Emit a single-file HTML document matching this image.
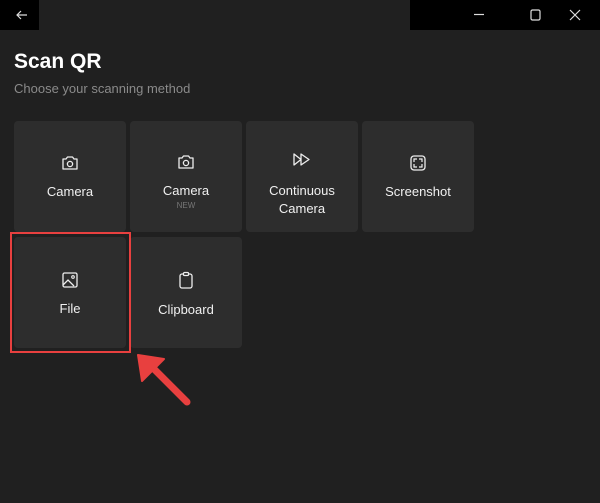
<!DOCTYPE html>
<html><head><style>
body{margin:0;width:600px;height:503px;background:#202020;position:relative;overflow:hidden;font-family:"Liberation Sans",sans-serif;color:#fff}
.blk{position:absolute;background:#000;top:0;height:30px}
.t{position:absolute;width:112px;height:111px;background:#2d2d2d;border-radius:4px;text-align:center;font-size:13px;color:#f0f0f0}
.t svg{position:absolute;left:46px;top:32px}
.t .l{position:absolute;left:0;right:0;top:63px}
</style></head><body>
<div class="blk" style="left:0;width:39px"></div>
<div class="blk" style="left:410px;width:190px"></div>
<svg style="position:absolute;left:14px;top:8px" width="16" height="14" viewBox="0 0 16 14"><path d="M13 7H3M7 3L3 7L7 11" stroke="#ddd" stroke-width="1.2" fill="none"/></svg>
<svg style="position:absolute;left:420px;top:0" width="180" height="30"><path d="M54 14.5H64" stroke="#ddd" stroke-width="1.2"/><rect x="111" y="10" width="9" height="10" rx="1.5" stroke="#ddd" stroke-width="1.2" fill="none"/><path d="M150 10L160 20M160 10L150 20" stroke="#ddd" stroke-width="1.2"/></svg>
<div style="position:absolute;left:14px;top:50px;font-size:21px;font-weight:bold">Scan QR</div>
<div style="position:absolute;left:14px;top:81px;font-size:13px;color:#8a8a8a">Choose your scanning method</div>

<div class="t" style="left:14px;top:121px"><svg width="20" height="20" viewBox="0 0 20 20"><path d="M3 6h3l1.5-2h5L14 6h3v10H3z" stroke="#eee" stroke-width="1.3" fill="none" stroke-linejoin="round"/><circle cx="10" cy="11" r="2.6" stroke="#eee" stroke-width="1.3" fill="none"/></svg><div class="l">Camera</div></div>
<div class="t" style="left:130px;top:121px"><svg width="20" height="20" viewBox="0 0 20 20" style="top:31px"><path d="M3 6h3l1.5-2h5L14 6h3v10H3z" stroke="#eee" stroke-width="1.3" fill="none" stroke-linejoin="round"/><circle cx="10" cy="11" r="2.6" stroke="#eee" stroke-width="1.3" fill="none"/></svg><div class="l" style="top:62px">Camera</div><div class="l" style="top:80px;font-size:8px;color:#777">NEW</div></div>
<div class="t" style="left:246px;top:121px"><svg width="20" height="20" viewBox="0 0 20 20" style="top:29px"><path d="M2 4v11l7-5.5zM9 4v11l8-5.5z" stroke="#eee" stroke-width="1.3" fill="none" stroke-linejoin="round"/></svg><div class="l" style="top:61px;line-height:18px">Continuous<br>Camera</div></div>
<div class="t" style="left:362px;top:121px"><svg width="20" height="20" viewBox="0 0 20 20"><rect x="3" y="3" width="14" height="14" rx="3" stroke="#eee" stroke-width="1.3" fill="none"/><path d="M6 9V6h3M11 6h3v3M14 11v3h-3M9 14H6v-3" stroke="#eee" stroke-width="1.2" fill="none"/></svg><div class="l">Screenshot</div></div>
<div class="t" style="left:14px;top:237px"><svg width="20" height="20" viewBox="0 0 20 20" style="top:33px"><rect x="3" y="3" width="14" height="14" rx="1.5" stroke="#eee" stroke-width="1.3" fill="none"/><path d="M3 15l5-5 6 6" stroke="#eee" stroke-width="1.3" fill="none"/><circle cx="13" cy="7" r="1.3" stroke="#eee" stroke-width="1.1" fill="none"/></svg><div class="l" style="top:64px">File</div></div>
<div class="t" style="left:130px;top:237px"><svg width="20" height="20" viewBox="0 0 20 20" style="top:33px"><rect x="4" y="4" width="12" height="14" rx="2" stroke="#eee" stroke-width="1.3" fill="none"/><rect x="7.5" y="2.5" width="5" height="3" rx="1" stroke="#eee" stroke-width="1.2" fill="#2d2d2d"/></svg><div class="l" style="top:65px">Clipboard</div></div>

<div style="position:absolute;left:10px;top:232px;width:117px;height:117px;border:2px solid #e8403f"></div>
<svg style="position:absolute;left:130px;top:350px" width="70" height="65"><path d="M57 52L20 15" stroke="#e8403f" stroke-width="7" stroke-linecap="round"/><path d="M8 5L34 9L12 31Z" fill="#e8403f" stroke="#e8403f" stroke-width="2" stroke-linejoin="round"/></svg>
</body></html>
